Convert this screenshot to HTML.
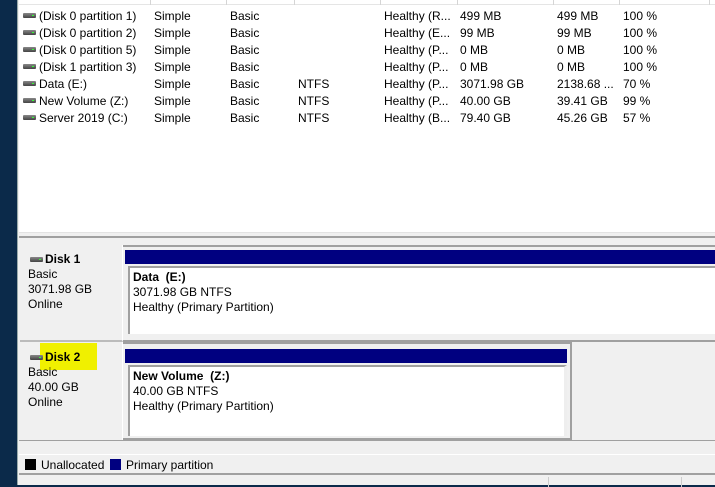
<!DOCTYPE html>
<html><head><meta charset="utf-8"><style>
*{margin:0;padding:0;box-sizing:border-box}
body{width:715px;height:485px;overflow:hidden;background:#0b2a4a;font-family:"Liberation Sans",sans-serif;font-size:12px;color:#000;position:relative}
.win{position:absolute;left:17px;top:0;width:698px;height:485px;background:#f0f0f0;border-left:1px solid #9aa}
.list{position:absolute;left:1px;top:0;width:697px;height:232px;background:#fff}
.hdr{position:absolute;top:0;left:0;width:697px;height:5px;background:#fff;border-bottom:1px solid #e5e5e5}
.hs{position:absolute;top:0;width:1px;height:5px;background:#d5d5d5}
.row{position:absolute;left:0;height:17px;width:697px;white-space:nowrap}
.row span{position:absolute;top:2px}
.ic{position:absolute;top:6px;left:4px;width:13px;height:5px;background:linear-gradient(#888,#444);border-radius:1px}
.ic:after{content:"";position:absolute;right:2px;top:2px;width:2px;height:1px;background:#3f3}
.split{position:absolute;left:1px;top:232px;width:697px;height:6px;background:#f0f0f0;border-top:1px solid #e3e3e3;border-bottom:2px solid #a0a0a0}
.lbl{position:absolute;left:2px;width:103px;background:#f0f0f0;border-right:1px solid #fff;border-bottom:2px solid #bbb;padding:7px 0 0 9px;line-height:15px}
.lbl b{display:block;padding-left:17px;position:relative}
.lbl b .ic{left:2px;top:5px}
.bar{position:absolute;background:#000080}
.box{position:absolute;background:#fff;border-top:2px solid #a0a0a0;border-left:2px solid #a0a0a0;padding:2px 0 0 3px;line-height:15px}
.outer{position:absolute;border:2px solid #a0a0a0;border-left:0}
</style></head><body>
<div class="win">
 <div class="list">
  <div class="hdr"></div>
  <div class="hs" style="left:131px"></div><div class="hs" style="left:207px"></div><div class="hs" style="left:275px"></div><div class="hs" style="left:361px"></div><div class="hs" style="left:438px"></div><div class="hs" style="left:534px"></div><div class="hs" style="left:600px"></div><div class="hs" style="left:690px"></div>
  <div class="row" style="top:7px"><i class="ic"></i><span style="left:20px">(Disk 0 partition 1)</span><span style="left:135px">Simple</span><span style="left:211px">Basic</span><span style="left:365px">Healthy (R...</span><span style="left:441px">499 MB</span><span style="left:538px">499 MB</span><span style="left:604px">100 %</span></div>
  <div class="row" style="top:24px"><i class="ic"></i><span style="left:20px">(Disk 0 partition 2)</span><span style="left:135px">Simple</span><span style="left:211px">Basic</span><span style="left:365px">Healthy (E...</span><span style="left:441px">99 MB</span><span style="left:538px">99 MB</span><span style="left:604px">100 %</span></div>
  <div class="row" style="top:41px"><i class="ic"></i><span style="left:20px">(Disk 0 partition 5)</span><span style="left:135px">Simple</span><span style="left:211px">Basic</span><span style="left:365px">Healthy (P...</span><span style="left:441px">0 MB</span><span style="left:538px">0 MB</span><span style="left:604px">100 %</span></div>
  <div class="row" style="top:58px"><i class="ic"></i><span style="left:20px">(Disk 1 partition 3)</span><span style="left:135px">Simple</span><span style="left:211px">Basic</span><span style="left:365px">Healthy (P...</span><span style="left:441px">0 MB</span><span style="left:538px">0 MB</span><span style="left:604px">100 %</span></div>
  <div class="row" style="top:75px"><i class="ic"></i><span style="left:20px">Data (E:)</span><span style="left:135px">Simple</span><span style="left:211px">Basic</span><span style="left:279px">NTFS</span><span style="left:365px">Healthy (P...</span><span style="left:441px">3071.98 GB</span><span style="left:538px">2138.68 ...</span><span style="left:604px">70 %</span></div>
  <div class="row" style="top:92px"><i class="ic"></i><span style="left:20px">New Volume (Z:)</span><span style="left:135px">Simple</span><span style="left:211px">Basic</span><span style="left:279px">NTFS</span><span style="left:365px">Healthy (P...</span><span style="left:441px">40.00 GB</span><span style="left:538px">39.41 GB</span><span style="left:604px">99 %</span></div>
  <div class="row" style="top:109px"><i class="ic"></i><span style="left:20px">Server 2019 (C:)</span><span style="left:135px">Simple</span><span style="left:211px">Basic</span><span style="left:279px">NTFS</span><span style="left:365px">Healthy (B...</span><span style="left:441px">79.40 GB</span><span style="left:538px">45.26 GB</span><span style="left:604px">57 %</span></div>
 </div>
 <div class="split"></div>

 <div class="lbl" style="top:245px;height:97px;padding-left:8px"><b><i class="ic"></i>Disk 1</b>Basic<br>3071.98 GB<br>Online</div>
 <div class="outer" style="left:105px;top:245px;width:593px;height:97px;border-right:0"></div>
 <div class="bar" style="left:107px;top:250px;width:591px;height:14px"></div>
 <div class="box" style="left:110px;top:266px;width:588px;height:68px"><b>Data &nbsp;(E:)</b><br>3071.98 GB NTFS<br>Healthy (Primary Partition)</div>

 <div class="lbl" style="top:342px;height:98px;border-bottom:0;padding-top:8px;padding-left:8px"><span style="position:absolute;left:20px;top:1px;width:57px;height:27px;background:#f0f000"></span><b><i class="ic" style="z-index:1"></i><span style="position:relative">Disk 2</span></b><span style="position:relative">Basic</span><br>40.00 GB<br>Online</div>
 <div class="outer" style="left:105px;top:342px;width:449px;height:98px"></div>
 <div class="bar" style="left:107px;top:349px;width:442px;height:14px"></div>
 <div class="box" style="left:110px;top:365px;width:439px;height:71px;border-right:3px solid #eee"><b>New Volume &nbsp;(Z:)</b><br>40.00 GB NTFS<br>Healthy (Primary Partition)</div>

 <div style="position:absolute;left:1px;top:440px;width:697px;height:2px;border-top:1px solid #a0a0a0"></div>
 <div style="position:absolute;left:1px;top:454px;width:697px;height:20px;border-top:1px solid #fff">
  <span style="position:absolute;left:6px;top:4px;width:11px;height:11px;background:#000"></span>
  <span style="position:absolute;left:22px;top:3px">Unallocated</span>
  <span style="position:absolute;left:91px;top:4px;width:11px;height:11px;background:#000080"></span>
  <span style="position:absolute;left:107px;top:3px">Primary partition</span>
 </div>
 <div style="position:absolute;left:1px;top:473px;width:697px;height:12px;border-top:2px solid #a0a0a0">
  <span style="position:absolute;left:529px;top:2px;width:1px;height:10px;background:#ccc"></span>
  <span style="position:absolute;left:662px;top:2px;width:1px;height:10px;background:#ccc"></span>
 </div>
</div>
</body></html>
